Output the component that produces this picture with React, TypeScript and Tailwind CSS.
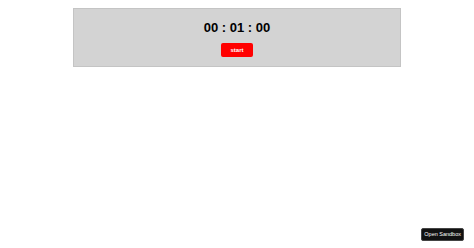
import { useState } from 'react';

// Countdown timer card
export default function App() {
  const [running, setRunning] = useState(false);

  return (
    <div className="relative h-[248px] w-full bg-white pt-2" style={{ fontFamily: '"Liberation Sans", Arial, sans-serif' }}>
      <div className="mx-auto flex w-[328px] flex-col items-center border border-[#c4c4c4] bg-[#d3d3d3] pt-[10px] pb-[9px]">
        <h1 className="text-[13px] font-bold leading-[17px] text-black">00 : 01 : 00</h1>
        <button
          onClick={() => setRunning(!running)}
          className="mt-[7px] flex h-[14px] w-[32px] items-center justify-center rounded-[2px] bg-[#ff0000] text-[6px] font-bold text-white"
        >
          {running ? 'stop' : 'start'}
        </button>
      </div>
      <div className="absolute right-[10px] bottom-[7px] flex h-[13px] items-center rounded-[2px] border border-[#444] bg-[#111] px-[2px] text-[5.5px] text-white">
        Open Sandbox
      </div>
    </div>
  );
}
